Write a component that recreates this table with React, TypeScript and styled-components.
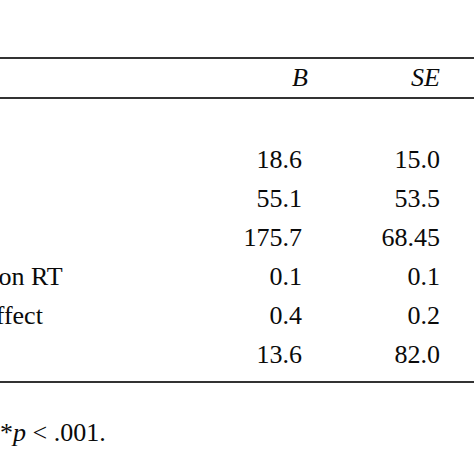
import styled, { createGlobalStyle } from 'styled-components';

const GlobalStyle = createGlobalStyle`
  html, body {
    margin: 0;
    padding: 0;
    background: #fff;
    overflow: hidden;
  }
  body {
    font-family: "Liberation Serif", "Times New Roman", serif;
    color: #0a0a0a;
  }
`;

const Page = styled.div`
  width: 474px;
  height: 474px;
  overflow: hidden;
  padding-top: 57px;
  box-sizing: border-box;
`;

// the label column runs off the left edge of the crop
const Table = styled.div`
  margin-left: -122px;
  width: 596px;
`;

const Rule = styled.div`
  height: 2px;
  background: #333;
`;

const Body = styled.div`
  padding: 2px 0 7px;
`;

const Row = styled.div<{ $h: number }>`
  display: grid;
  grid-template-columns: 1fr 120px 138px 34px;
  font-size: 26px;
  line-height: ${({ $h }) => $h}px;
  min-height: ${({ $h }) => $h}px;
  white-space: nowrap;
`;

const Label = styled.div`
  text-align: left;
`;

const Num = styled.div`
  text-align: right;
`;

const Head = styled.div<{ $shift?: number }>`
  text-align: right;
  font-style: italic;
  margin-right: ${({ $shift }) => -($shift ?? 0)}px;
`;

const Note = styled.div`
  margin-top: 30px;
  font-size: 26px;
  line-height: 39px;
  white-space: nowrap;
`;

const Italic = styled.span`
  font-style: italic;
`;

const rows = [
  { label: '', b: '18.6', se: '15.0' },
  { label: '', b: '55.1', se: '53.5' },
  { label: '', b: '175.7', se: '68.45' },
  { label: 'Mean fixation RT', b: '0.1', se: '0.1' },
  { label: 'Response effect', b: '0.4', se: '0.2' },
  { label: '', b: '13.6', se: '82.0' },
];

export default function App() {
  return (
    <Page>
      <GlobalStyle />
      <Table>
        <Rule />
        <Row $h={38}>
          <Label />
          <Head $shift={6}>B</Head>
          <Head>SE</Head>
          <div />
        </Row>
        <Rule />
        <Body>
          <Row $h={39} />
          {rows.map((r) => (
            <Row $h={39} key={r.b + r.se}>
              <Label>{r.label}</Label>
              <Num>{r.b}</Num>
              <Num>{r.se}</Num>
              <div />
            </Row>
          ))}
        </Body>
        <Rule />
      </Table>
      <Note>
        *<Italic>p</Italic> &lt; .001.
      </Note>
    </Page>
  );
}
